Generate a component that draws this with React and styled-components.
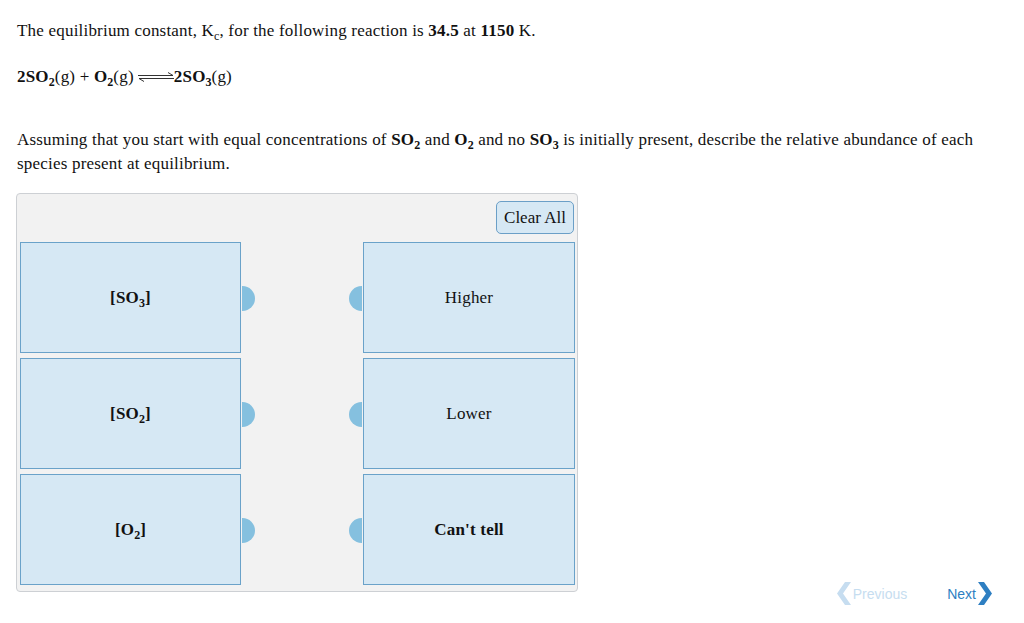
import React from "react";
import styled, { createGlobalStyle } from "styled-components";

const GlobalStyle = createGlobalStyle`
    html, body {
        margin: 0;
        padding: 0;
        background: #fff;
    }
    body {
        font-family: "Liberation Serif", "Times New Roman", serif;
        font-size: 17px;
        letter-spacing: 0.2px;
        color: #111;
    }
`;

function EquilibriumArrow() {
    return (
        <ArrowSvg width="36" height="10" viewBox="0 0 36 10">
            <path d="M0 3.5 H35 L30 0.5" fill="none" stroke="#333" strokeWidth="1" />
            <path d="M1 6.5 H36 M1 6.5 L6 9.5" fill="none" stroke="#333" strokeWidth="1" />
        </ArrowSvg>
    );
}

function Chevron({ dir, color }) {
    const pts = dir === "right"
        ? "0,0 6,0 14,11.5 6,23 0,23 8,11.5"
        : "14,0 8,0 0,11.5 8,23 14,23 6,11.5";
    return (
        <svg width="14" height="23" viewBox="0 0 14 23">
            <polygon points={pts} fill={color} />
        </svg>
    );
}

export default function App() {
    const leftItems = [
        { key: "so3", label: <b>[SO<Sub>3</Sub>]</b> },
        { key: "so2", label: <b>[SO<Sub>2</Sub>]</b> },
        { key: "o2", label: <b>[O<Sub>2</Sub>]</b> },
    ];

    const rightItems = [
        { key: "higher", label: "Higher" },
        { key: "lower", label: "Lower" },
        { key: "cant", label: <b>Can't tell</b> },
    ];

    return (
        <Page>
            <GlobalStyle />
            <Line>
                The equilibrium constant, K<Sub>c</Sub>, for the following reaction is <b>34.5</b> at <b>1150</b> K.
            </Line>
            <Equation>
                <b>2SO<Sub>2</Sub></b>(g) + <b>O<Sub>2</Sub></b>(g)
                <EquilibriumArrow />
                <b>2SO<Sub>3</Sub></b>(g)
            </Equation>
            <Prompt>
                Assuming that you start with equal concentrations of <b>SO<Sub>2</Sub></b> and <b>O<Sub>2</Sub></b> and no <b>SO<Sub>3</Sub></b> is initially present, describe the relative abundance of each species present at equilibrium.
            </Prompt>
            <BottomRow>
                <Panel>
                    <Toolbar>
                        <ClearButton>Clear All</ClearButton>
                    </Toolbar>
                    <MatchGrid>
                        {leftItems.map((item, i) => (
                            <React.Fragment key={item.key}>
                                <Tile side="left">{item.label}</Tile>
                                <Spacer />
                                <Tile side="right">{rightItems[i].label}</Tile>
                            </React.Fragment>
                        ))}
                    </MatchGrid>
                </Panel>
                <Nav>
                    <NavLink disabled>
                        <Chevron dir="left" color="#c6ddf0" />
                        Previous
                    </NavLink>
                    <NavLink>
                        Next
                        <Chevron dir="right" color="#2e7fc2" />
                    </NavLink>
                </Nav>
            </BottomRow>
        </Page>
    );
}

const Page = styled.div`
    padding: 19px 17px 0 17px;
`;

const Line = styled.div`
    line-height: 24px;
`;

const Sub = styled.sub`
    font-size: 12px;
    vertical-align: -4px;
    line-height: 0;
    letter-spacing: 0;
`;

const Equation = styled.div`
    margin-top: 22px;
    line-height: 24px;
    display: flex;
    align-items: center;
    white-space: pre;
`;

const ArrowSvg = styled.svg`
    margin: 0 0 0 4px;
`;

const Prompt = styled.div`
    margin-top: 39px;
    line-height: 24px;
`;

const BottomRow = styled.div`
    margin-top: 17px;
    display: flex;
    align-items: flex-end;
`;

const Panel = styled.div`
    box-sizing: border-box;
    width: 562px;
    margin-left: -1px;
    margin-bottom: 13px;
    background: #f2f2f2;
    border: 1px solid #cdd0d4;
    border-radius: 4px;
    padding: 7px 2px 6px 3px;
`;

const Toolbar = styled.div`
    display: flex;
    justify-content: flex-end;
    padding-right: 1px;
    margin-bottom: 8px;
`;

const ClearButton = styled.button`
    box-sizing: border-box;
    height: 33px;
    width: 78px;
    padding: 0;
    font-family: "Liberation Serif", "Times New Roman", serif;
    font-size: 17px;
    letter-spacing: 0;
    color: #111;
    background: #d6e8f4;
    border: 1px solid #6b9fc7;
    border-radius: 5px;
`;

const MatchGrid = styled.div`
    display: grid;
    grid-template-columns: 221px 122px 212px;
    grid-auto-rows: 111px;
    row-gap: 5px;
`;

const Spacer = styled.div``;

const Tile = styled.div`
    position: relative;
    box-sizing: border-box;
    background: #d6e8f4;
    border: 1px solid #6aa2c9;
    display: flex;
    align-items: center;
    justify-content: center;

    &::after {
        content: "";
        position: absolute;
        top: 50%;
        width: 13px;
        height: 25px;
        margin-top: -12px;
        background: #85c0df;
        ${(p) => p.side === "left"
            ? "left: calc(100% + 2px); border-radius: 0 13px 13px 0;"
            : "right: calc(100% + 2px); border-radius: 13px 0 0 13px;"}
    }
`;

const Nav = styled.div`
    margin-left: auto;
    margin-right: 15px;
    display: flex;
    align-items: center;
    gap: 40px;
`;

const NavLink = styled.span`
    display: flex;
    align-items: center;
    gap: 2px;
    font-family: "Liberation Sans", Arial, sans-serif;
    font-size: 14px;
    letter-spacing: 0;
    color: ${(p) => (p.disabled ? "#c6ddf0" : "#2e7fc2")};
    cursor: ${(p) => (p.disabled ? "default" : "pointer")};
`;
